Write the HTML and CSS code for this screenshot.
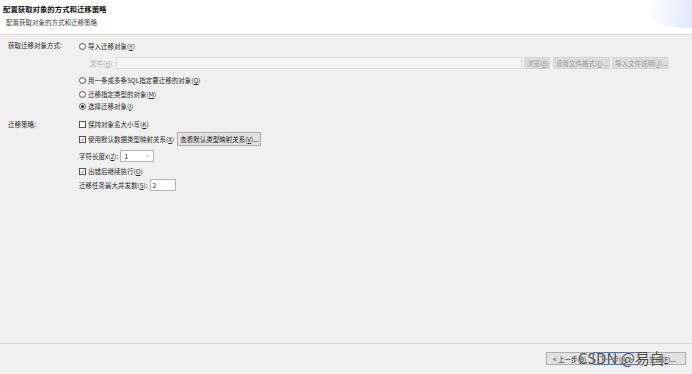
FILE: index.html
```html
<!DOCTYPE html>
<html lang="zh-CN">
<head>
  <meta charset="UTF-8" />
  <title>配置获取对象的方式和迁移策略</title>
  <link rel="stylesheet" href="styles.css">
</head>
<body>
  <div class="wizard">
    <div class="header">
      <div class="title">配置获取对象的方式和迁移策略</div>
      <div class="subtitle">配置获取对象的方式和迁移策略</div>
      <div class="swoosh"></div>
    </div>

    <div class="content">
      <div class="section">
        <div class="label first">获取迁移对象方式:</div>
        <div class="options">
          <div class="opt r1"><span class="radio"></span>导入迁移对象(<u>Y</u>)</div>
          <div class="file-row">
            <span class="file-label">文件(<u>H</u>):</span>
            <span class="file-input"></span>
            <button class="btn disabled browse">浏览(<u>B</u>)</button>
            <button class="btn disabled fmt">设置文件格式(<u>E</u>)...</button>
            <button class="btn disabled desc">导入文件说明(<u>J</u>)...</button>
          </div>
          <div class="opt r2"><span class="radio"></span>用一条或多条SQL指定要迁移的对象(<u>Q</u>)</div>
          <div class="opt r3"><span class="radio"></span>迁移指定类型的对象(<u>M</u>)</div>
          <div class="opt r4"><span class="radio checked"></span>选择迁移对象(<u>I</u>)</div>
        </div>
      </div>

      <div class="section">
        <div class="label second">迁移策略:</div>
        <div class="options">
          <div class="opt c1"><span class="check"></span>保持对象名大小写(<u>K</u>)</div>
          <div class="opt c2">
            <span class="check checked"><svg viewBox="0 0 8 8"><path d="M1.5 4.2 L3.3 6 L6.6 1.8" /></svg></span>使用默认数据类型映射关系(<u>X</u>)
            <button class="btn map">查看默认类型映射关系(<u>V</u>)...</button>
          </div>
          <div class="opt c3">
            字符长度x(<u>Z</u>):
            <span class="select">1<svg viewBox="0 0 8 5"><path d="M1 1 L4 4 L7 1" /></svg></span>
          </div>
          <div class="opt c4"><span class="check checked"><svg viewBox="0 0 8 8"><path d="M1.5 4.2 L3.3 6 L6.6 1.8" /></svg></span>出错后继续执行(<u>O</u>)</div>
          <div class="opt c5">
            迁移任务最大并发数(<u>S</u>):
            <span class="num">2</span>
          </div>
        </div>
      </div>
    </div>

    <div class="footer">
      <button class="btn nav">&lt; 上一步(<u>B</u>)</button>
      <button class="btn nav primary">下一步(<u>N</u>) &gt;</button>
      <button class="btn nav">完成(<u>F</u>)...</button>
      <div class="watermark">CSDN @易白</div>
    </div>
  </div>
</body>
</html>
```

FILE: styles.css
```css
/* ─── Reset & Body ───────────────────────────────────────────────────────── */
* { box-sizing: border-box; margin: 0; padding: 0; }
body {
  width: 692px;
  height: 374px;
  overflow: hidden;
  background: #f0f0f0;
  font-family: "Noto Sans CJK SC", "Noto Sans", sans-serif;
  font-size: 6.5px;
  color: #2a2a2a;
}
u { text-decoration: underline; }

.wizard {
  display: flex;
  flex-direction: column;
  height: 374px;
}

/* ─── Header ─────────────────────────────────────────────────────────────── */
.header {
  position: relative;
  height: 35px;
  background: #fff;
  border-bottom: 1px solid #d6d6d6;
  padding: 3px 0 0 3px;
  overflow: hidden;
}
.title {
  font-size: 7.4px;
  font-weight: bold;
  color: #111;
  line-height: 12px;
}
.subtitle {
  margin: 2px 0 0 3px;
  line-height: 10px;
  color: #444;
}
.swoosh {
  position: absolute;
  right: -45px;
  top: -34px;
  width: 100px;
  height: 62px;
  border-radius: 50%;
  background: linear-gradient(100deg, rgba(255,255,255,0) 15%, #e4e9f8 55%, #d6ddf3 90%);
}

/* ─── Content ────────────────────────────────────────────────────────────── */
.content {
  flex: 1;
  padding: 5px 0 0 8px;
}
.section { display: flex; }
.label {
  width: 71px;
  line-height: 12px;
}
.label.first { margin-top: -1px; }
.label.second { margin-top: 6px; }
.options { display: flex; flex-direction: column; }

.opt {
  display: flex;
  align-items: center;
  height: 12px;
  white-space: nowrap;
}
.r2 { margin-top: 5px; }
.r3 { margin-top: 2px; }
.c1 { margin-top: 6px; }
.c2 { height: 14px; margin-top: 2px; }
.c3 { height: 14px; margin-top: 3px; }
.c4 { margin-top: 2px; }
.c5 { height: 13px; margin-top: 1px; }

.radio {
  width: 7px;
  height: 7px;
  border: 1px solid #555;
  border-radius: 50%;
  margin-right: 2px;
  display: flex;
  align-items: center;
  justify-content: center;
  background: #fff;
}
.radio.checked::after {
  content: "";
  width: 3px;
  height: 3px;
  border-radius: 50%;
  background: #222;
}
.check {
  width: 7px;
  height: 7px;
  border: 1px solid #555;
  margin-right: 2px;
  background: #fff;
  display: flex;
}
.check svg { width: 100%; height: 100%; }
.check path { fill: none; stroke: #333; stroke-width: 1; }

/* ─── File row ───────────────────────────────────────────────────────────── */
.file-row {
  display: flex;
  align-items: center;
  height: 12px;
  margin-top: 5px;
}
.file-label {
  margin-left: 11px;
  width: 26px;
  color: #a8a8a8;
}
.file-input {
  width: 406px;
  height: 12px;
  border: 1px solid #dcdcdc;
  background: #f4f4f4;
}

/* ─── Buttons ────────────────────────────────────────────────────────────── */
.btn {
  font: inherit;
  height: 12px;
  padding: 0 2px;
  border: 1px solid #adadad;
  background: #e1e1e1;
  color: #222;
  white-space: nowrap;
}
.btn.disabled {
  border-color: #d4d4d4;
  background: #dddddd;
  color: #9c9c9c;
}
.browse { width: 26px; margin-left: 2px; }
.fmt { width: 57px; margin-left: 3px; }
.desc { width: 56px; margin-left: 2px; }
.map { width: 84px; height: 14px; margin-left: 3px; }

.select {
  display: flex;
  align-items: center;
  justify-content: space-between;
  width: 34px;
  height: 12px;
  margin-left: 2px;
  padding: 0 3px;
  background: #fff;
  border: 1px solid #b4b4b4;
  color: #222;
}
.select svg { width: 5px; height: 4px; }
.select path { fill: none; stroke: #888; stroke-width: 1; }
.num {
  width: 26px;
  height: 12px;
  margin-left: 2px;
  padding: 0 2px;
  line-height: 10px;
  background: #fff;
  border: 1px solid #b4b4b4;
  color: #222;
}

/* ─── Footer ─────────────────────────────────────────────────────────────── */
.footer {
  position: relative;
  height: 31px;
  border-top: 1px solid #d8d8d8;
  display: flex;
  justify-content: flex-end;
  align-items: flex-start;
  padding: 8px 6px 0 0;
}
.nav { width: 47px; height: 13px; }
.nav.primary { border-color: #2b7bd0; width: 46px; }
.watermark {
  position: absolute;
  left: 578px;
  top: 4px;
  font-size: 15px;
  line-height: 19px;
  color: #4a4a4a;
  text-shadow: 0 0 1px #fff, 0 0 1px #fff;
  font-family: "Noto Sans CJK SC", "Noto Sans", sans-serif;
  white-space: nowrap;
}
```
